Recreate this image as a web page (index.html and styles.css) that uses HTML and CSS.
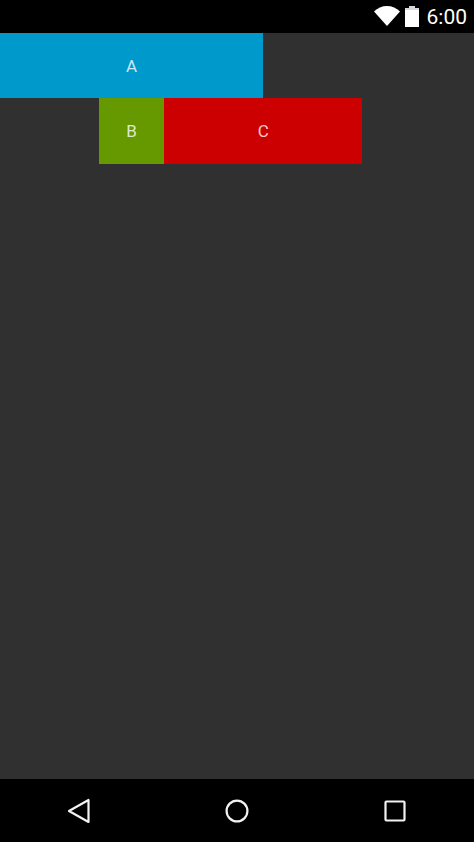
FILE: index.html

```html
<!DOCTYPE html>
<html lang="en">
<head>
  <meta charset="UTF-8">
  <meta name="viewport" content="width=device-width, initial-scale=1.0">
  <title>Grid layout</title>
  <link rel="stylesheet" href="styles.css">
</head>
<body>
  <div class="status-bar">
    <svg class="wifi" width="26" height="20" viewBox="0 0 26 20">
      <path d="M0 5.500 C3.500 2 8 0 13 0 C18 0 22.500 2 26 5.500 L13 20 Z" fill="#fff"/>
    </svg>
    <svg class="battery" width="14" height="21" viewBox="0 0 14 21">
      <path d="M4 0 H10 V2 H14 V21 H0 V2 H4 Z" fill="#fff"/>
      <path d="M4 0 H10 V2 H14 V4 H0 V2 H4 Z" fill="#d8d8d8"/>
    </svg>
    <span class="clock">6:00</span>
  </div>
  <div class="content">
    <div class="row">
      <div class="tile tile-a">A</div>
    </div>
    <div class="row row-indent">
      <div class="tile tile-b">B</div>
      <div class="tile tile-c">C</div>
    </div>
  </div>
  <div class="nav-bar">
    <svg class="nav-icon" width="24" height="26" viewBox="0 0 24 26">
      <path d="M2 13 L21.500 2 V24 Z" fill="none" stroke="#f2f2f2" stroke-width="2.200" stroke-linejoin="round"/>
    </svg>
    <svg class="nav-icon" width="24" height="24" viewBox="0 0 24 24">
      <circle cx="12" cy="12" r="10.400" fill="none" stroke="#f2f2f2" stroke-width="2.200"/>
    </svg>
    <svg class="nav-icon" width="22" height="22" viewBox="0 0 22 22">
      <rect x="1.500" y="1.500" width="19" height="19" rx="1" fill="none" stroke="#f2f2f2" stroke-width="2.200"/>
    </svg>
  </div>
</body>
</html>
```

FILE: styles.css

```css
html, body {
  height: 100%;
}
body {
  margin: 0;
  height: 842px;
  display: flex;
  flex-direction: column;
  background-color: #303030;
  font-family: Roboto, "Liberation Sans", sans-serif;
  overflow: hidden;
}
.status-bar {
  height: 33px;
  flex: none;
  background: #000;
  display: flex;
  align-items: flex-start;
  justify-content: flex-end;
  padding-right: 7px;
  color: #fff;
}
.wifi {
  margin-right: 5px;
  margin-top: 6px;
}
.battery {
  margin-right: 8px;
  margin-top: 6px;
}
.clock {
  font-size: 21px;
  line-height: 35px;
}
.content {
  flex: 1;
}
.row {
  display: flex;
  height: 65.400px;
}
.row-indent {
  padding-left: 98.700px;
}
.tile {
  display: flex;
  align-items: center;
  justify-content: center;
  font-size: 17px;
  color: rgba(255, 255, 255, 0.8);
}
.tile-a {
  width: 263.300px;
  background-color: #0099cc;
}
.tile-b {
  width: 65.700px;
  background-color: #669900;
}
.tile-c {
  width: 197.600px;
  background-color: #cc0000;
}
.nav-bar {
  height: 63px;
  flex: none;
  background: #000;
  display: grid;
  grid-template-columns: 158px 158px 158px;
  justify-items: center;
  align-items: center;
}
.nav-icon {
  display: block;
}
```
